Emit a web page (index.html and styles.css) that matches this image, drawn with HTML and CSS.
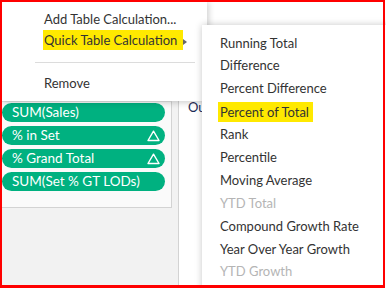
FILE: index.html
```html
<!DOCTYPE html>
<html>
<head>
<meta charset="utf-8">
<link rel="stylesheet" href="styles.css">
</head>
<body>
<div class="screen">
  <div class="app">
    <div class="side">
      <div class="shelf">
        <div class="pill"><span>SUM(Sales)</span></div>
        <div class="pill"><span>% in Set</span><svg class="delta" width="13" height="12" viewBox="0 0 13 12"><path d="M6.5 1.2 L12 10.5 L1 10.5 Z" fill="none" stroke="#fff" stroke-width="1.4" stroke-linejoin="round"/></svg></div>
        <div class="pill"><span>% Grand Total</span><svg class="delta" width="13" height="12" viewBox="0 0 13 12"><path d="M6.5 1.2 L12 10.5 L1 10.5 Z" fill="none" stroke="#fff" stroke-width="1.4" stroke-linejoin="round"/></svg></div>
        <div class="pill"><span>SUM(Set % GT LODs)</span></div>
      </div>
    </div>
    <div class="main">
      <div class="main-text">Ou</div>
    </div>
  </div>

  <div class="menu">
    <div class="item">Add Table Calculation...</div>
    <div class="item"><span class="mark wide">Quick Table Calculation</span><span class="arrow"></span></div>
    <div class="sep"></div>
    <div class="item">Remove</div>
  </div>

  <div class="submenu">
    <div class="sitem">Running Total</div>
    <div class="sitem">Difference</div>
    <div class="sitem">Percent Difference</div>
    <div class="sitem"><span class="mark">Percent of Total</span></div>
    <div class="sitem">Rank</div>
    <div class="sitem">Percentile</div>
    <div class="sitem">Moving Average</div>
    <div class="sitem disabled">YTD Total</div>
    <div class="sitem">Compound Growth Rate</div>
    <div class="sitem">Year Over Year Growth</div>
    <div class="sitem disabled">YTD Growth</div>
  </div>

  <div class="frame"></div>
</div>
</body>
</html>
```
FILE: styles.css
```css
* { box-sizing: border-box; }
html, body { margin: 0; padding: 0; }
body {
  font-family: "Lato", "Liberation Sans", sans-serif;
  font-size: 13px;
  color: #333;
}
.screen {
  position: relative;
  width: 386px;
  height: 288px;
  overflow: hidden;
  background: #fff;
}
.app {
  display: flex;
  width: 386px;
  height: 288px;
}
.side {
  width: 179px;
  background: #f2f2f2;
  border-right: 1px solid #d3d3d3;
  padding-top: 101px;
}
.shelf {
  width: 172px;
  height: 107px;
  background: #fafafa;
  border-top: 1px solid #e4e4e4;
  border-right: 1px solid #d3d3d3;
  border-bottom: 1px solid #d3d3d3;
  padding: 1px 0 0 2px;
  display: flex;
  flex-direction: column;
  gap: 4px;
}
.pill {
  width: 163px;
  height: 19px;
  border-radius: 10px;
  background: #00b180;
  color: #fff;
  font-size: 13.5px;
  display: flex;
  align-items: center;
  justify-content: space-between;
  padding: 0 5px 0 10px;
  line-height: 19px;
}
.delta { margin-top: 0; }
.main {
  flex: 1;
  background: #fff;
  position: relative;
}
.main-text {
  padding: 97px 0 0 9px;
  color: #1d2b57;
  line-height: 20px;
}
.menu {
  position: absolute;
  left: 0;
  top: 0;
  width: 207px;
  height: 101px;
  background: #fff;
  box-shadow: 2px 2px 6px rgba(0,0,0,0.18);
  padding-top: 9px;
}
.item {
  height: 20px;
  line-height: 20px;
  padding-left: 44px;
  display: flex;
  align-items: center;
  margin-bottom: 1px;
}
.mark {
  background: #ffe900;
  display: inline-block;
  line-height: 20px;
  height: 20px;
  padding: 0 4px 0 2px;
  margin-left: -2px;
}
.mark.wide { width: 140px; margin-left: -1px; padding-left: 1px; }
.arrow {
  width: 0;
  height: 0;
  border-left: 4px solid #666;
  border-top: 3.5px solid transparent;
  border-bottom: 3.5px solid transparent;
  margin-top: 4px;
}
.sep {
  height: 1px;
  background: #dcdcdc;
  margin: 12px 12px 10px 35px;
}
.submenu {
  position: absolute;
  left: 202px;
  top: 25px;
  width: 200px;
  height: 290px;
  background: #fff;
  box-shadow: 0 0 7px rgba(0,0,0,0.22);
  padding-top: 6.5px;
}
.sitem {
  height: 22.9px;
  line-height: 22.9px;
  padding-left: 18px;
}
.sitem .mark { line-height: 20px; vertical-align: middle; margin-top: -2px; }
.disabled { color: #b5b5b5; }
.frame {
  position: absolute;
  left: 0;
  top: 0;
  width: 385px;
  height: 288px;
  border: 2px solid #ff0000;
  border-bottom-width: 3px;
  pointer-events: none;
}
```
